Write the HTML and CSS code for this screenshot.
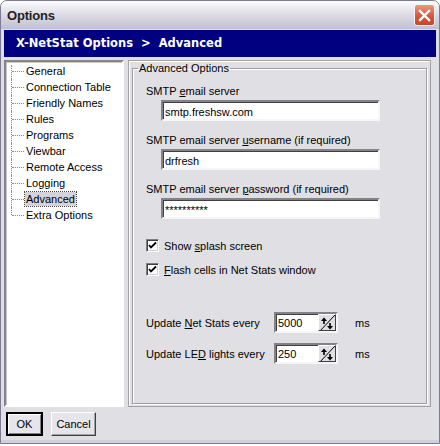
FILE: index.html
```html
<!DOCTYPE html>
<html>
	<head>
		<meta charset="UTF-8">
		<title>Options</title>
		<link rel="stylesheet" href="styles.css">
	</head>
	<body>
		<div class="window">
			<div class="titlebar">
				<span class="title">Options</span>
				<span class="close">
					<svg width="13" height="13" viewBox="0 0 13 13"><path d="M2 2L11 11M11 2L2 11" stroke="#fff" stroke-width="2.4" stroke-linecap="square"/></svg>
				</span>
			</div>
			<div class="client">
				<div class="banner">X-NetStat Options&nbsp; &gt; &nbsp;Advanced</div>
				<div class="main">
					<ul class="tree">
						<li><span>General</span></li>
						<li><span>Connection Table</span></li>
						<li><span>Friendly Names</span></li>
						<li><span>Rules</span></li>
						<li><span>Programs</span></li>
						<li><span>Viewbar</span></li>
						<li><span>Remote Access</span></li>
						<li><span>Logging</span></li>
						<li class="active"><span>Advanced</span></li>
						<li><span>Extra Options</span></li>
					</ul>
					<div class="page">
						<fieldset class="group">
							<legend>Advanced Options</legend>
							<div class="field">
								<label>SMTP <u>e</u>mail server</label>
								<input class="edit" type="text" value="smtp.freshsw.com">
							</div>
							<div class="field">
								<label>SMTP email server <u>u</u>sername (if required)</label>
								<input class="edit" type="text" value="drfresh">
							</div>
							<div class="field">
								<label>SMTP email server <u>p</u>assword (if required)</label>
								<input class="edit" type="text" value="**********">
							</div>
							<div class="checks">
								<div class="check"><span class="box"><svg width="9" height="9" viewBox="0 0 9 9"><path d="M1 4L3 6.5L8 1.5" fill="none" stroke="#000" stroke-width="1.8"/></svg></span><span>Show <u>s</u>plash screen</span></div>
								<div class="check"><span class="box"><svg width="9" height="9" viewBox="0 0 9 9"><path d="M1 4L3 6.5L8 1.5" fill="none" stroke="#000" stroke-width="1.8"/></svg></span><span><u>F</u>lash cells in Net Stats window</span></div>
							</div>
							<div class="rates">
								<div class="rate">
									<span class="rlabel">Update <u>N</u>et Stats every</span>
									<span class="spin"><span class="val">5000</span><span class="sbtn"><svg width="16" height="17" viewBox="0 0 16 17"><path d="M0 17L16 0" stroke="#000"/><path d="M2 6L5 2.5L8 6Z" fill="#000"/><rect x="4.2" y="5" width="1.6" height="4" fill="#000"/><path d="M8 11L11 14.5L14 11Z" fill="#000"/><rect x="10.2" y="8" width="1.6" height="4" fill="#000"/></svg></span></span>
									<span class="unit">ms</span>
								</div>
								<div class="rate">
									<span class="rlabel">Update LE<u>D</u> lights every</span>
									<span class="spin"><span class="val">250</span><span class="sbtn"><svg width="16" height="17" viewBox="0 0 16 17"><path d="M0 17L16 0" stroke="#000"/><path d="M2 6L5 2.5L8 6Z" fill="#000"/><rect x="4.2" y="5" width="1.6" height="4" fill="#000"/><path d="M8 11L11 14.5L14 11Z" fill="#000"/><rect x="10.2" y="8" width="1.6" height="4" fill="#000"/></svg></span></span>
									<span class="unit">ms</span>
								</div>
							</div>
						</fieldset>
					</div>
				</div>
				<div class="buttons">
					<button class="btn default">OK</button>
					<button class="btn cancel">Cancel</button>
				</div>
			</div>
		</div>
	</body>
</html>
```
FILE: styles.css
```css
html,body{
	width: 100%;
	height: 100%;
	margin: 0;
}
body{
	background: #fff;
	font: 11px "Liberation Sans", Arial, sans-serif;
	color: #000;
}
ul,li{
	margin: 0;
	padding: 0;
	list-style: none;
}
.window{
	width: 440px;
	height: 444px;
	box-sizing: border-box;
	border: 1px solid #7c7b92;
	border-radius: 7px 7px 0 0;
	background: #e0dfe3;
	display: flex;
	flex-direction: column;
}
.titlebar{
	height: 28px;
	display: flex;
	align-items: center;
	padding: 0 4px 0 6px;
	border-radius: 6px 6px 0 0;
	background: linear-gradient(#fdfdfe, #ebebf1 25%, #d6d5e0 60%, #c1c0d0);
}
.title{
	font: bold 13px "Liberation Sans", Arial, sans-serif;
	color: #222;
	letter-spacing: -0.2px;
}
.close{
	margin-left: auto;
	width: 19px;
	height: 20px;
	border: 1px solid #f4f4f6;
	border-radius: 3px;
	background: linear-gradient(#e99a85, #d5583b 55%, #c9452a);
	display: flex;
	align-items: center;
	justify-content: center;
}
.client{
	flex: 1;
	display: flex;
	flex-direction: column;
	padding: 1px 3px 0 3px;
	border-bottom: 3px solid #d2d1db;
}
.banner{
	height: 27px;
	background: #000080;
	color: #fff;
	font: bold 11.5px "DejaVu Sans", Verdana, sans-serif;
	line-height: 27px;
	padding-left: 12px;
	white-space: pre;
}
.main{
	display: flex;
	margin-top: 3px;
	height: 347px;
}
.tree{
	width: 120px;
	box-sizing: border-box;
	background: #fff;
	border: 2px solid;
	border-color: #848388 #fff #fff #848388;
	box-shadow: inset 1px 1px 0 #c8c7cc;
	padding-top: 1px;
}
.tree li{
	position: relative;
	height: 16px;
	line-height: 16px;
	padding-left: 19px;
}
.tree li:before{
	content: "";
	position: absolute;
	left: 5px;
	top: 0;
	height: 16px;
	border-left: 1px dotted #8a8a8a;
}
.tree li:first-child:before{
	top: 2px;
	height: 14px;
}
.tree li:last-child:before{
	height: 8px;
}
.tree li:after{
	content: "";
	position: absolute;
	left: 6px;
	top: 8px;
	width: 12px;
	border-top: 1px dotted #8a8a8a;
}
.tree li span{
	padding: 1px 1px;
}
.tree li.active span{
	background: #d4d3d9;
	outline: 1px dotted #444;
	outline-offset: 0;
}
.page{
	width: 303px;
	margin-left: 4px;
	box-sizing: border-box;
	border: 1px solid #a2a1a8;
	box-shadow: inset 1px 1px 0 #fff;
	padding: 0 3px 2px 3px;
	display: flex;
	flex-direction: column;
}
.group{
	flex: 1;
	margin: 1px 0 0 0;
	padding: 0 0 0 13px;
	border: 1px solid #9e9da6;
	box-shadow: inset 1px 1px 0 #fff, 1px 1px 0 #fff;
	min-width: 0;
}
.group legend{
	padding: 0 1px;
	margin-left: -8px;
	line-height: 13px;
}
.field{
	margin-top: 9px;
	margin-bottom: 12px;
}
.field + .field{
	margin-top: 0;
}
.field label{
	display: block;
	line-height: 14px;
	margin-bottom: 2px;
}
.edit{
	display: block;
	margin: 0 0 0 15px;
	width: 219px;
	height: 21px;
	box-sizing: border-box;
	border: 2px solid;
	border-color: #838288 #f6f6f8 #f6f6f8 #838288;
	box-shadow: inset 1px 1px 0 #404040;
	padding: 2px 1px 0 2px;
	font: 11px "Liberation Sans", Arial, sans-serif;
	color: #000;
	background: #fff;
	outline: none;
}
.checks{
	margin-top: 20px;
	display: flex;
	flex-direction: column;
	gap: 11px;
}
.check{
	display: flex;
	align-items: center;
	height: 13px;
}
.box{
	width: 13px;
	height: 13px;
	box-sizing: border-box;
	border: 1px solid;
	border-color: #7e7d85 #fff #fff #7e7d85;
	box-shadow: inset 1px 1px 0 #404040, inset -1px -1px 0 #d4d3d9;
	background: #fff;
	margin-right: 5px;
	display: flex;
	align-items: center;
	justify-content: center;
}
.rates{
	margin-top: 36px;
	display: flex;
	flex-direction: column;
	gap: 10px;
}
.rate{
	display: flex;
	align-items: center;
	height: 21px;
}
.rlabel{
	width: 128px;
}
.spin{
	width: 64px;
	height: 21px;
	box-sizing: border-box;
	border: 2px solid;
	border-color: #838288 #f6f6f8 #f6f6f8 #838288;
	box-shadow: inset 1px 1px 0 #404040;
	background: #fff;
	display: flex;
	align-items: center;
}
.val{
	flex: 1;
	padding-left: 2px;
}
.sbtn{
	width: 18px;
	height: 17px;
	box-sizing: border-box;
	background: #e0dfe3;
	border: 1px solid;
	border-color: #fff #404040 #404040 #fff;
	display: flex;
	overflow: hidden;
}
.sbtn svg{
	display: block;
}
.unit{
	margin-left: 17px;
}
.buttons{
	display: flex;
	gap: 8px;
	padding: 5px 0 0 2px;
}
.btn{
	height: 24px;
	box-sizing: border-box;
	font: 11px "Liberation Sans", Arial, sans-serif;
	color: #000;
	background: #e6e5ea;
	border: 1px solid;
	border-color: #fff #404040 #404040 #fff;
	box-shadow: inset -1px -1px 0 #a3a2a8;
	padding: 0;
}
.btn.default{
	width: 37px;
	outline: 1px solid #000;
	outline-offset: -1px;
	border: 2px solid;
	border-color: #000;
	box-shadow: inset 1px 1px 0 #fff, inset -1px -1px 0 #808080;
}
.btn.cancel{
	width: 45px;
}
```
